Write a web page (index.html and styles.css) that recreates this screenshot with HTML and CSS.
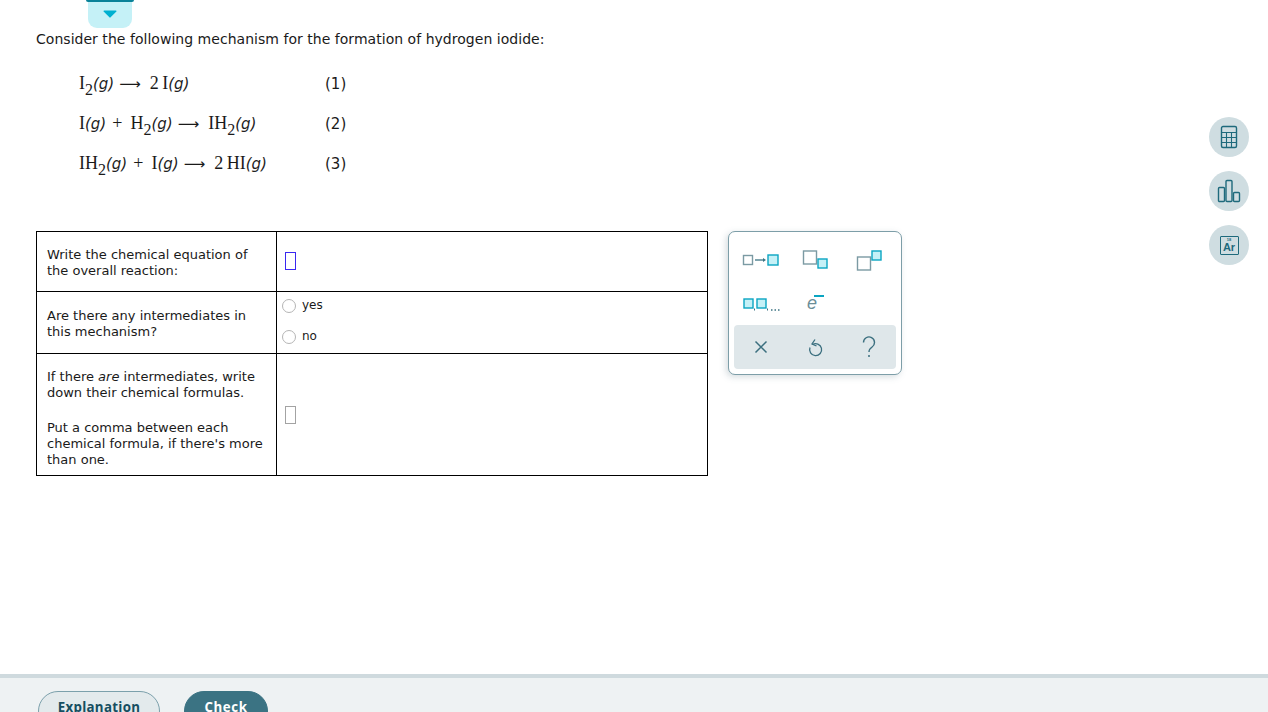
FILE: index.html
```html
<!DOCTYPE html>
<html lang="en">
<head>
<meta charset="utf-8">
<title>Hydrogen iodide mechanism</title>
<link rel="stylesheet" href="styles.css">
</head>
<body>
<div class="page">
  <main class="content">
    <div class="tab"><svg width="14" height="8" viewBox="0 0 14 8"><path d="M1 0.5h12a.6.6 0 0 1 .4 1L7.6 7.3a.8.8 0 0 1-1.2 0L.6 1.5a.6.6 0 0 1 .4-1z" fill="#00b0d0"/></svg></div>
    <p class="intro">Consider the following mechanism for the formation of hydrogen iodide:</p>
    <div class="equations">
      <div class="eq"><span class="m">I<sub>2</sub></span><i>(g)</i><span class="arrow">⟶</span><span class="m prod">2 I</span><i>(g)</i></div><div class="num">(1)</div>
      <div class="eq"><span class="m">I</span><i>(g)</i><span class="m plus">+</span><span class="m">H<sub>2</sub></span><i>(g)</i><span class="arrow">⟶</span><span class="m prod">IH<sub>2</sub></span><i>(g)</i></div><div class="num">(2)</div>
      <div class="eq"><span class="m">IH<sub>2</sub></span><i>(g)</i><span class="m plus">+</span><span class="m">I</span><i>(g)</i><span class="arrow">⟶</span><span class="m prod">2 HI</span><i>(g)</i></div><div class="num">(3)</div>
    </div>
    <div class="work">
      <table class="grid">
        <tr class="r1">
          <td class="q">Write the chemical equation of the overall reaction:</td>
          <td class="a"><span class="box active"></span></td>
        </tr>
        <tr class="r2">
          <td class="q">Are there any intermediates in this mechanism?</td>
          <td class="a radios">
            <label class="radio"><span class="dot"></span>yes</label>
            <label class="radio"><span class="dot"></span>no</label>
          </td>
        </tr>
        <tr class="r3">
          <td class="q">If there <em>are</em> intermediates, write down their chemical formulas.<br><span class="gap">Put a comma between each chemical formula, if there's more than one.</span></td>
          <td class="a"><span class="box"></span></td>
        </tr>
      </table>
      <div class="palette">
        <div class="tools">
          <svg class="tool" width="38" height="16" viewBox="0 0 38 16"><rect x="1.500" y="2.500" width="9" height="9" fill="#fff" stroke="#7b9aa3" stroke-width="1.400"/><path d="M13 7h9" stroke="#3b7383" stroke-width="1.300"/><path d="M21 5l3 2-3 2z" fill="#3b7383"/><rect x="26" y="2" width="10" height="10" fill="#c5f1f7" stroke="#0aa5c2" stroke-width="1.400"/></svg>
          <svg class="tool" width="28" height="22" viewBox="0 0 28 22"><rect x="2.500" y="1" width="13" height="13" fill="#fff" stroke="#7b9aa3" stroke-width="1.400"/><rect x="17" y="9" width="9" height="9" fill="#c5f1f7" stroke="#0aa5c2" stroke-width="1.400"/></svg>
          <svg class="tool" width="28" height="22" viewBox="0 0 28 22"><rect x="2.500" y="7" width="13" height="13" fill="#fff" stroke="#7b9aa3" stroke-width="1.400"/><rect x="17" y="1" width="9" height="9" fill="#c5f1f7" stroke="#0aa5c2" stroke-width="1.400"/></svg>
          <svg class="tool series" width="38" height="14" viewBox="0 0 38 14"><rect x="2" y="1" width="9" height="9" fill="#c5f1f7" stroke="#0aa5c2" stroke-width="1.400"/><path d="M12.500 10.500v2" stroke="#3b7383"/><rect x="15" y="1" width="9" height="9" fill="#c5f1f7" stroke="#0aa5c2" stroke-width="1.400"/><path d="M25.500 10.500v2" stroke="#3b7383"/><path d="M29 12h1.500M32.500 12h1.500M36 12h1.500" stroke="#3b7383" stroke-width="1.400"/></svg>
          <span class="tool electron"><i>e</i><b></b></span>
        </div>
        <div class="actions">
          <svg width="16" height="16" viewBox="0 0 16 16"><path d="M2.500 2.500l11 11M13.500 2.500l-11 11" stroke="#3b6f7f" stroke-width="1.500" fill="none"/></svg>
          <svg width="16" height="20" viewBox="0 0 16 20"><path d="M5.500 5.500a6 6 0 1 1-2.500 3" stroke="#3b6f7f" stroke-width="1.300" fill="none" transform="translate(0 2)"/><path d="M8 2.500L5 7l4.500 2" stroke="#3b6f7f" stroke-width="1.300" fill="none"/></svg>
          <svg width="16" height="22" viewBox="0 0 16 22"><path d="M2.500 6.500a5.500 5.500 0 1 1 8.600 4.500c-2 1.400-3.100 2.500-3.100 5" stroke="#3b6f7f" stroke-width="1.400" fill="none"/><circle cx="8" cy="20" r="1" fill="#3b6f7f"/></svg>
        </div>
      </div>
    </div>
  </main>
  <aside class="side">
    <span class="round"><svg width="20" height="24" viewBox="0 0 20 24"><rect x="2.500" y="1.500" width="15" height="21" rx="1.500" fill="none" stroke="#1e6a7c" stroke-width="1.400"/><path d="M2.500 7.500h15M2.500 12.500h15M2.500 17.500h15M7.500 7.500V22.500M12.500 7.500V22.500" stroke="#1e6a7c" stroke-width="1.100" fill="none"/></svg></span>
    <span class="round"><svg width="24" height="24" viewBox="0 0 24 24"><rect x="1.500" y="8.500" width="6" height="14" rx="1" fill="none" stroke="#1e6a7c" stroke-width="1.400"/><rect x="9" y="1.500" width="6" height="21" rx="1" fill="none" stroke="#1e6a7c" stroke-width="1.400"/><rect x="16.500" y="13.500" width="6" height="9" rx="1" fill="none" stroke="#1e6a7c" stroke-width="1.400"/></svg></span>
    <span class="round"><span class="element"><small>18</small>Ar</span></span>
  </aside>
  <footer class="foot">
    <button class="btn ghost">Explanation</button>
    <button class="btn solid">Check</button>
  </footer>
</div>
</body>
</html>
```

FILE: styles.css
```css
* { box-sizing: border-box; }
html, body { margin: 0; height: 100%; overflow: hidden; background: #fff; }
body { font-family: "DejaVu Sans", Verdana, sans-serif; color: #1a1a1a; }
.page { position: relative; height: 712px; display: flex; flex-direction: column; }
.content { flex: 1; padding-left: 36px; }
.tab { position: relative; width: 44px; height: 28px; margin-left: 52px; background: #c5f1f7; border-radius: 0 0 9px 9px; display: flex; justify-content: center; padding-top: 10px; }
.tab::before { content: ""; position: absolute; left: -2px; right: -2px; top: 0; height: 2px; background: #0a8299; border-radius: 0 0 2px 2px; }
.tab svg { display: block; }
.intro { margin: 2px 0 0; font-size: 14px; line-height: 18px; letter-spacing: .03px; }
.equations { display: grid; grid-template-columns: 246px auto; justify-content: start; margin: 25px 0 0 43px; grid-auto-rows: 40px; }
.eq { font-size: 14px; line-height: 20px; display: flex; align-items: baseline; white-space: nowrap; }
.eq i { font-size: 15px; color: #222; }
.m { font-family: "Liberation Serif", serif; font-size: 18px; }
.m sub { font-size: 16px; line-height: 0; vertical-align: -6px; }
.plus { margin: 0 8px 0 6px; }
.arrow { font-family: "DejaVu Sans", sans-serif; font-size: 15px; margin: 0 9px 0 5px; }
.prod { word-spacing: -1px; }
.num { font-size: 15px; line-height: 20px; padding-top: 1px; }
.work { display: flex; align-items: flex-start; margin-top: 38px; }
.grid { width: 672px; border-collapse: collapse; font-size: 13px; line-height: 16px; table-layout: fixed; }
.grid td { border: 1px solid #000; vertical-align: middle; }
.grid .q { width: 240px; padding: 2px 10px 0; }
.grid .a { padding: 0 8px; }
.r1 { height: 60px; }
.r2 { height: 62px; }
.r3 { height: 122px; }
.grid .r3 .q { padding-top: 7px; }
.gap { display: block; margin-top: 19px; }
.box { display: block; width: 11px; height: 18px; border: 1.500px solid #a3a3a3; background: #fff; }
.box.active { border: 1px solid #3a28f0; margin-bottom: 2px; }
.grid .radios { padding: 0 4px 0 5px; font-size: 12px; vertical-align: top; }
.radio { display: flex; align-items: center; gap: 6px; height: 26px; }
.radio + .radio { margin-top: 5px; }
.dot { width: 14px; height: 14px; margin-top: 2px; border-radius: 50%; border: 1.500px solid #b5b5b5; background: #fff; }
.palette { width: 174px; height: 144px; margin-left: 20px; border: 1px solid #7d9ea8; border-radius: 7px; background: #fff; box-shadow: -2px 2px 6px rgba(90,120,130,.25); padding: 0 5px 5px; display: flex; flex-direction: column; justify-content: flex-end; }
.tools { display: grid; grid-template-columns: 54px 54px 54px; grid-template-rows: 40px 38px; row-gap: 6px; justify-items: center; align-items: center; }
.series { margin-bottom: 2px; }
.electron { position: relative; font-family: "Liberation Sans", sans-serif; font-size: 18px; color: #6b8e98; line-height: 16px; width: 16px; margin-bottom: 6px; }
.electron b { position: absolute; left: 7px; top: 0; width: 10px; height: 2px; background: #0aa5c2; }
.actions { height: 44px; background: #dfe7ea; border-radius: 4px; display: grid; grid-template-columns: 54px 54px 54px; justify-items: center; align-items: center; }
.side { position: absolute; top: 117px; left: 1209px; display: flex; flex-direction: column; gap: 14px; }
.round { width: 40px; height: 40px; border-radius: 50%; background: #cfdde1; display: flex; align-items: center; justify-content: center; }
.element { width: 19px; height: 19px; border: 1.500px solid #1e6a7c; border-radius: 1px; color: #1e6a7c; font: bold 11px/10px "Liberation Sans", sans-serif; display: flex; flex-direction: column; align-items: center; }
.element small { font-size: 4px; line-height: 5px; }
.foot { height: 38px; border-top: 4px solid #cfdade; background: #eef2f3; padding: 13px 0 0 38px; display: flex; gap: 24px; align-items: flex-start; overflow: hidden; }
.btn { height: 40px; flex: none; border-radius: 20px; font: bold 13.300px/16px "Open Sans", sans-serif; padding: 0 0 8px; letter-spacing: .3px; }
.ghost { width: 122px; background: #e3eaec; border: 1px solid #7ba0ab; color: #164e60; }
.solid { width: 84px; background: #3b7383; border: 1px solid #3b7383; color: #fff; letter-spacing: .6px; }
```
